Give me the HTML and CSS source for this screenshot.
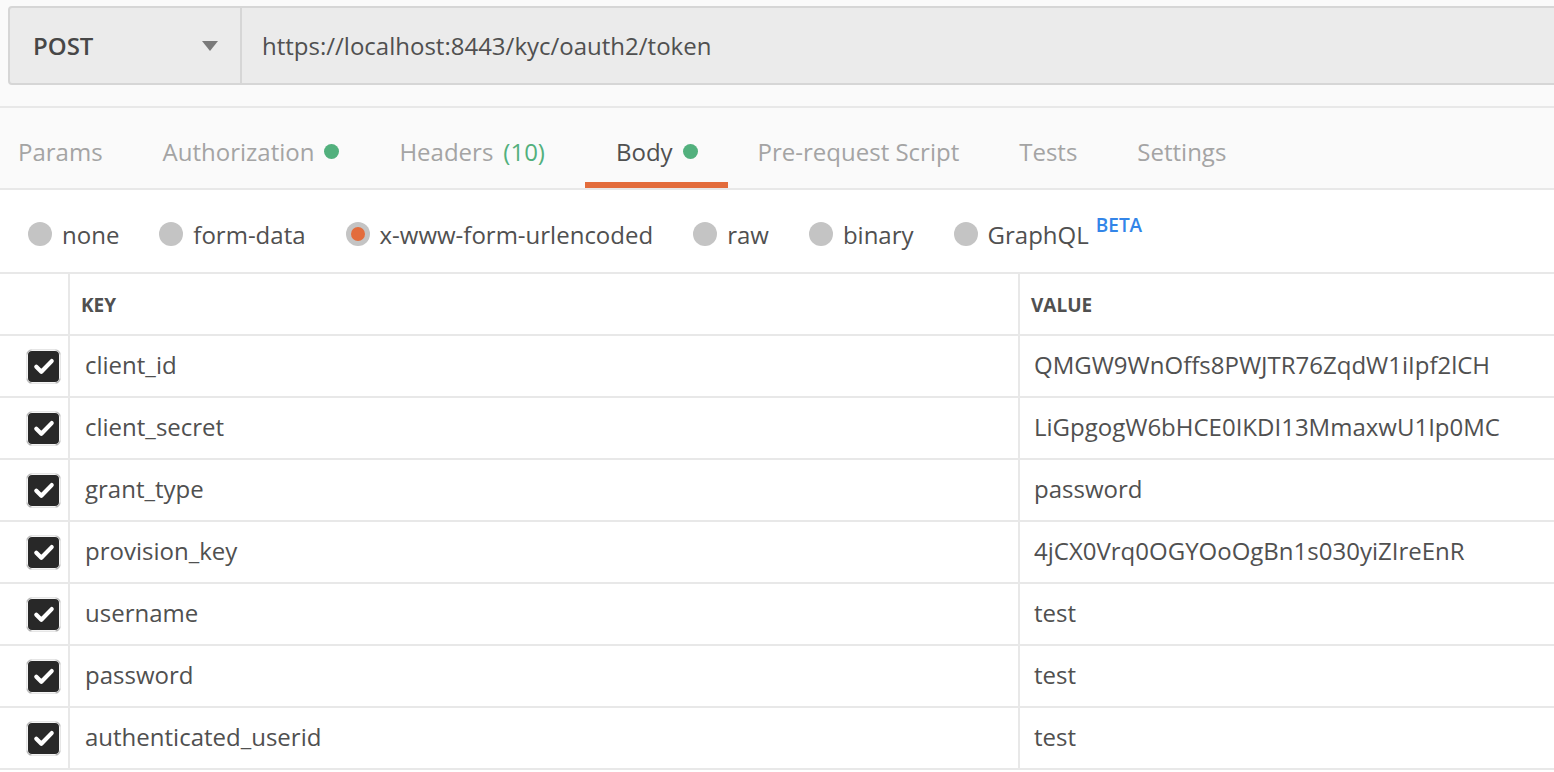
FILE: index.html
```html
<!DOCTYPE html>
<html>
<head>
<meta charset="utf-8">
<link rel="stylesheet" href="styles.css">
</head>
<body>
<div class="urlbar">
  <div class="method">
    <span class="method-name">POST</span>
    <span class="caret"></span>
  </div>
  <div class="url">https://localhost:8443/kyc/oauth2/token</div>
</div>

<div class="tabs">
  <div class="tab">Params</div>
  <div class="tab">Authorization <span class="dot"></span></div>
  <div class="tab headers">Headers <span class="count">(10)</span></div>
  <div class="tab active">Body <span class="dot"></span></div>
  <div class="tab">Pre-request Script</div>
  <div class="tab">Tests</div>
  <div class="tab">Settings</div>
</div>

<div class="content">
  <div class="radios">
    <label class="radio"><span class="circle"></span>none</label>
    <label class="radio"><span class="circle"></span>form-data</label>
    <label class="radio"><span class="circle on"></span>x-www-form-urlencoded</label>
    <label class="radio"><span class="circle"></span>raw</label>
    <label class="radio"><span class="circle"></span>binary</label>
    <label class="radio"><span class="circle"></span>GraphQL<sup class="beta">BETA</sup></label>
  </div>

  <div class="table">
    <div class="row head">
      <div class="cell check"></div>
      <div class="cell key">KEY</div>
      <div class="cell value">VALUE</div>
    </div>
    <div class="row">
      <div class="cell check"><span class="box"><svg viewBox="0 0 20 20"><path d="M4.5 10.5l3.6 3.6 7.4-7.6"/></svg></span></div>
      <div class="cell key">client_id</div>
      <div class="cell value">QMGW9WnOffs8PWJTR76ZqdW1iIpf2lCH</div>
    </div>
    <div class="row">
      <div class="cell check"><span class="box"><svg viewBox="0 0 20 20"><path d="M4.5 10.5l3.6 3.6 7.4-7.6"/></svg></span></div>
      <div class="cell key">client_secret</div>
      <div class="cell value">LiGpgogW6bHCE0IKDI13MmaxwU1Ip0MC</div>
    </div>
    <div class="row">
      <div class="cell check"><span class="box"><svg viewBox="0 0 20 20"><path d="M4.5 10.5l3.6 3.6 7.4-7.6"/></svg></span></div>
      <div class="cell key">grant_type</div>
      <div class="cell value">password</div>
    </div>
    <div class="row">
      <div class="cell check"><span class="box"><svg viewBox="0 0 20 20"><path d="M4.5 10.5l3.6 3.6 7.4-7.6"/></svg></span></div>
      <div class="cell key">provision_key</div>
      <div class="cell value">4jCX0Vrq0OGYOoOgBn1s030yiZIreEnR</div>
    </div>
    <div class="row">
      <div class="cell check"><span class="box"><svg viewBox="0 0 20 20"><path d="M4.5 10.5l3.6 3.6 7.4-7.6"/></svg></span></div>
      <div class="cell key">username</div>
      <div class="cell value">test</div>
    </div>
    <div class="row">
      <div class="cell check"><span class="box"><svg viewBox="0 0 20 20"><path d="M4.5 10.5l3.6 3.6 7.4-7.6"/></svg></span></div>
      <div class="cell key">password</div>
      <div class="cell value">test</div>
    </div>
    <div class="row">
      <div class="cell check"><span class="box"><svg viewBox="0 0 20 20"><path d="M4.5 10.5l3.6 3.6 7.4-7.6"/></svg></span></div>
      <div class="cell key">authenticated_userid</div>
      <div class="cell value">test</div>
    </div>
  </div>
</div>
</body>
</html>
```

FILE: styles.css
```css
* { box-sizing: border-box; }
html, body {
  margin: 0;
  padding: 0;
  overflow: hidden;
}
body {
  background: #fafafa;
  font-family: "Open Sans", "Liberation Sans", sans-serif;
  font-size: 24px;
  color: #505050;
  width: 1554px;
  height: 772px;
}

.urlbar {
  display: flex;
  padding: 6px 0 0 8px;
  height: 106px;
}
.method {
  width: 234px;
  height: 79px;
  background: #ebebeb;
  border: 2px solid #d6d6d6;
  border-radius: 4px 0 0 4px;
  display: flex;
  align-items: center;
  justify-content: space-between;
  padding: 0 22px 0 23px;
}
.method-name {
  font-weight: 600;
  color: #474747;
}
.caret {
  width: 0;
  height: 0;
  border-left: 8px solid transparent;
  border-right: 8px solid transparent;
  border-top: 10px solid #7a7a7a;
}
.url {
  flex: 1;
  height: 79px;
  background: #ebebeb;
  border-top: 2px solid #d6d6d6;
  border-bottom: 2px solid #d6d6d6;
  margin-right: -10px;
  display: flex;
  align-items: center;
  padding-left: 20px;
  color: #505050;
}

.tabs {
  display: flex;
  height: 84px;
  border-top: 2px solid #e8e8e8;
  border-bottom: 2px solid #e8e8e8;
  background: #fafafa;
}
.tab {
  display: flex;
  align-items: center;
  padding: 7px 30px 0 30px;
  color: #a4a4a4;
  height: 80px;
  position: relative;
}
.tab:first-child { padding-left: 18px; padding-right: 30px; }
.tab.headers { padding-right: 40px; }
.tab .dot {
  display: inline-block;
  width: 15px;
  height: 15px;
  border-radius: 50%;
  background: #52b07d;
  margin-left: 10px;
}
.tab .count { color: #52b07d; margin-left: 10px; }
.tab.active { color: #505050; padding-left: 31px; }
.tab.active::after {
  content: "";
  position: absolute;
  left: 0;
  right: 0;
  bottom: 0;
  height: 6px;
  background: #e36c3c;
}

.content {
  background: #fff;
  height: 600px;
}
.radios {
  display: flex;
  align-items: center;
  height: 82px;
  padding: 6px 0 0 28px;
}
.radio {
  display: flex;
  align-items: center;
  margin-right: 40px;
  color: #505050;
}
.circle {
  width: 24px;
  height: 24px;
  border-radius: 50%;
  background: #c4c4c4;
  margin-right: 10px;
  display: flex;
  align-items: center;
  justify-content: center;
}
.circle.on::after {
  content: "";
  width: 14px;
  height: 14px;
  border-radius: 50%;
  background: #e36c3c;
}
.beta {
  font-size: 19px;
  font-weight: 600;
  color: #3385e8;
  margin-left: 7px;
  position: relative;
  top: -9px;
  vertical-align: baseline;
}

.table {
  border-top: 2px solid #e8e8e8;
}
.row {
  display: flex;
  height: 62px;
  border-bottom: 2px solid #e8e8e8;
}
.cell {
  display: flex;
  align-items: center;
}
.cell.check {
  width: 70px;
  border-right: 2px solid #e8e8e8;
  padding-left: 26px;
}
.cell.key {
  width: 950px;
  border-right: 2px solid #e8e8e8;
  padding-left: 15px;
  padding-bottom: 3px;
}
.cell.value {
  flex: 1;
  padding-left: 14px;
  padding-bottom: 3px;
}
.row.head .cell.key, .row.head .cell.value {
  font-size: 19px;
  font-weight: 700;
  color: #505050;
  padding-left: 11px;
  padding-bottom: 0;
  padding-top: 2px;
}
.box {
  width: 35px;
  height: 35px;
  border-radius: 6px;
  border: 1px solid #e6e6e6;
  background: #282828;
  box-shadow: inset 0 0 0 1px #f4f4f4;
  display: flex;
  align-items: center;
  justify-content: center;
}
.box svg {
  width: 28px;
  height: 28px;
  fill: none;
  stroke: #fff;
  stroke-width: 3;
  stroke-linecap: round;
  stroke-linejoin: round;
}
```
